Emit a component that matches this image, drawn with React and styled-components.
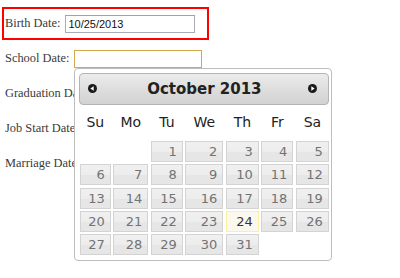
import React from "react";
import styled, { createGlobalStyle } from "styled-components";

const Global = createGlobalStyle`
  html, body { margin: 0; padding: 0; background: #fff; }
  body { font-family: "Liberation Serif", "Times New Roman", serif; font-size: 12px; color: #333; }
`;

const Form = styled.div`
  display: flex;
  flex-direction: column;
  gap: 2px;
  box-sizing: border-box;
  min-height: 278px;
  padding: 7px 0 0 2px;
`;

const FieldRow = styled.div`
  display: flex;
  align-items: center;
  box-sizing: border-box;
  height: 33px;
  width: ${(p) => (p.$highlight ? "207px" : "auto")};
  border: 2px solid ${(p) => (p.$highlight ? "#ff0000" : "transparent")};
  padding-left: 1px;
  white-space: nowrap;
`;

const Label = styled.label`
  font-family: "Liberation Serif", "Times New Roman", serif;
  font-size: 12.4px;
  color: #3a3a3a;
  margin-right: 5px;
`;

const InputWrap = styled.span`
  position: relative;
  display: inline-block;
`;

const TextInput = styled.input`
  display: block;
  box-sizing: border-box;
  width: ${(p) => p.$width}px;
  height: 18px;
  margin: 0;
  padding: 0 2px;
  border: 1px solid ${(p) => (p.$focused ? "#d4a94e" : "#abadb3")};
  border-top-color: ${(p) => (p.$focused ? "#d4a94e" : "#9da3ab")};
  outline: none;
  font-family: "Liberation Sans", Arial, sans-serif;
  font-size: 11px;
  color: #111;
  background: #fff;
`;

const Picker = styled.div`
  position: absolute;
  top: 100%;
  left: 0;
  z-index: 2;
  box-sizing: border-box;
  width: 258px;
  padding: 4px 2px 5px 4px;
  background: #fff;
  border: 1px solid #bdbdbd;
  border-radius: 4px;
  font-family: "DejaVu Sans", Verdana, sans-serif;
`;

const Header = styled.div`
  display: grid;
  grid-template-columns: 1fr auto 1fr;
  align-items: center;
  box-sizing: border-box;
  height: 32px;
  border: 1px solid #b4b4b4;
  border-radius: 4px;
  background: linear-gradient(to bottom, #ececec 0%, #dedede 50%, #d2d2d2 100%);
`;

const NavButton = styled.span`
  display: flex;
  justify-self: ${(p) => (p.$side === "next" ? "end" : "start")};
  padding: ${(p) => (p.$side === "next" ? "0 11px 0 0" : "0 0 0 8px")};
`;

const Title = styled.div`
  font-weight: bold;
  font-size: 15px;
  color: #222;
`;

const Grid = styled.div`
  display: grid;
  grid-template-columns: 31px 35px 32px 38px 33px 32px 33px;
  grid-template-rows: 34px repeat(5, 21px);
  column-gap: 2.5px;
  row-gap: 2.35px;
  padding-left: 0.5px;
`;

const DayName = styled.div`
  display: flex;
  align-items: center;
  justify-content: center;
  font-size: 14px;
  color: #222;
`;

const DayCell = styled.div`
  box-sizing: border-box;
  border: 1px solid ${(p) => (p.$today ? "#fcefa1" : "#d3d3d3")};
  background: ${(p) =>
    p.$today
      ? "#fbf9ee"
      : "linear-gradient(to bottom, #f0f0f0 0%, #ededed 50%, #e6e6e6 52%, #e6e6e6 100%)"};
  color: ${(p) => (p.$today ? "#363636" : "#737373")};
  font-size: 13px;
  line-height: 19px;
  text-align: right;
  padding-right: 5px;
`;

const Empty = styled.div``;

const NavIcon = ({ dir }) => (
  <svg width="9" height="9" viewBox="0 0 10 10">
    <circle cx="5" cy="5" r="5" fill="#1a1a1a" />
    {dir === "prev" ? (
      <path d="M2.6 5 L6.3 2.6 L6.3 7.4 Z" fill="#fff" />
    ) : (
      <path d="M7.4 5 L3.7 2.6 L3.7 7.4 Z" fill="#fff" />
    )}
  </svg>
);

const days = ["Su", "Mo", "Tu", "We", "Th", "Fr", "Sa"];

function Calendar() {
  const cells = [];
  for (let i = 0; i < 2; i++) cells.push(null);
  for (let d = 1; d <= 31; d++) cells.push(d);
  while (cells.length < 35) cells.push(null);
  return (
    <Picker>
      <Header>
        <NavButton $side="prev">
          <NavIcon dir="prev" />
        </NavButton>
        <Title>October 2013</Title>
        <NavButton $side="next">
          <NavIcon dir="next" />
        </NavButton>
      </Header>
      <Grid>
        {days.map((d) => (
          <DayName key={d}>{d}</DayName>
        ))}
        {cells.map((d, i) =>
          d === null ? (
            <Empty key={"e" + i} />
          ) : (
            <DayCell key={d} $today={d === 24}>
              {d}
            </DayCell>
          )
        )}
      </Grid>
    </Picker>
  );
}

export default function App() {
  return (
    <>
      <Global />
      <Form>
        <FieldRow $highlight>
          <Label>Birth Date:</Label>
          <InputWrap>
            <TextInput $width={130} defaultValue="10/25/2013" />
          </InputWrap>
        </FieldRow>
        <FieldRow>
          <Label>School Date:</Label>
          <InputWrap>
            <TextInput $width={128} $focused defaultValue="" />
            <Calendar />
          </InputWrap>
        </FieldRow>
        <FieldRow>
          <Label>Graduation Date:</Label>
          <InputWrap>
            <TextInput $width={130} defaultValue="" />
          </InputWrap>
        </FieldRow>
        <FieldRow>
          <Label>Job Start Date:</Label>
          <InputWrap>
            <TextInput $width={130} defaultValue="" />
          </InputWrap>
        </FieldRow>
        <FieldRow>
          <Label>Marriage Date:</Label>
          <InputWrap>
            <TextInput $width={130} defaultValue="" />
          </InputWrap>
        </FieldRow>
      </Form>
    </>
  );
}
